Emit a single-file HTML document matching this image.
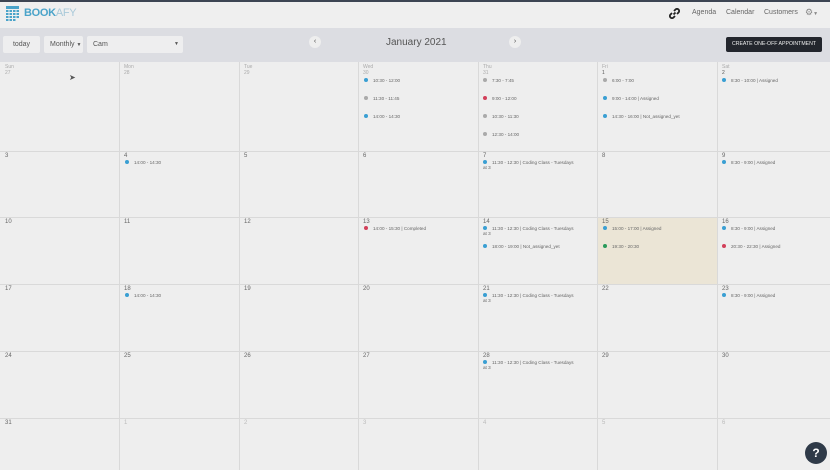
<!DOCTYPE html>
<html><head><meta charset="utf-8"><style>
*{margin:0;padding:0;box-sizing:border-box}
body{width:830px;height:470px;overflow:hidden;background:#eeeeee;font-family:"Liberation Sans",sans-serif;position:relative;color:#555}
.a{position:absolute}
.topbar{left:0;top:0;width:830px;height:2px;background:#3d4553}
.hdr{left:0;top:2px;width:830px;height:26px;background:#efefef}
.tb{left:0;top:28px;width:830px;height:34px;background:#dcdde2}
.btn{background:#eeeeef;border-radius:2px;font-size:7px;color:#555;line-height:17px;height:17px}
.vl{width:1px;background:#d9d9d9;top:62px;height:408px}
.hl{height:1px;background:#d9d9d9;left:0;width:830px}
.dn{font-size:6px;color:#666}
.dh{font-size:5px;color:#aaa}
.g{color:#bbb}
.ev{font-size:4.6px;color:#666;white-space:nowrap;line-height:5px}
.dot{position:absolute;width:4px;height:4px;border-radius:50%}
.b{background:#3a9fd3}.r{background:#d2405a}.gr{background:#aaa}.gn{background:#2a9a5a}
.nav{font-size:7px;color:#666}
</style></head><body>
<div class="a topbar"></div>
<div class="a hdr"></div>
<svg class="a" style="left:6px;top:6px" width="13" height="15" viewBox="0 0 13 15">
<rect x="0" y="0" width="13" height="3" fill="#4aa3c9"/>
<g fill="#4aa3c9">
<rect x="0" y="4" width="2.5" height="2"/><rect x="3.5" y="4" width="2.5" height="2"/><rect x="7" y="4" width="2.5" height="2"/><rect x="10.5" y="4" width="2.5" height="2"/>
<rect x="0" y="7" width="2.5" height="2"/><rect x="3.5" y="7" width="2.5" height="2"/><rect x="7" y="7" width="2.5" height="2"/><rect x="10.5" y="7" width="2.5" height="2"/>
<rect x="0" y="10" width="2.5" height="2"/><rect x="3.5" y="10" width="2.5" height="2"/><rect x="7" y="10" width="2.5" height="2"/><rect x="10.5" y="10" width="2.5" height="2"/>
<rect x="0" y="13" width="2.5" height="2"/><rect x="3.5" y="13" width="2.5" height="2"/><rect x="7" y="13" width="2.5" height="2"/>
</g></svg>
<div class="a" style="left:24px;top:7px;font-size:11px;font-weight:bold;letter-spacing:-0.3px;color:#4aa3c9">BOOK<span style="color:#a9c9d9;font-weight:normal">AFY</span></div>
<svg class="a" style="left:669px;top:8px" width="11" height="11" viewBox="0 0 11 11"><g fill="none" stroke="#222" stroke-width="1.8"><path d="M4.5 6.5 L6.5 4.5"/><path d="M5 3 L6.5 1.5 A2 2 0 0 1 9.5 4.5 L8 6"/><path d="M3 5 L1.5 6.5 A2 2 0 0 0 4.5 9.5 L6 8"/></g></svg>
<div class="a nav" style="left:692px;top:9px">Agenda</div>
<div class="a nav" style="left:726px;top:9px">Calendar</div>
<div class="a nav" style="left:764px;top:9px">Customers</div>
<div class="a nav" style="left:805px;top:7px;font-size:9px;color:#888">⚙<span style="font-size:5px">▼</span></div>
<div class="a tb"></div>
<div class="a btn" style="left:3px;top:36px;width:37px;text-align:center">today</div>
<div class="a btn" style="left:44px;top:36px;width:39px;padding-left:6px">Monthly <span style="font-size:5px">▼</span></div>
<div class="a btn" style="left:87px;top:36px;width:96px;padding-left:6px">Cam<span style="position:absolute;right:4px;font-size:5px">▼</span></div>
<div class="a" style="left:309px;top:36px;width:12px;height:12px;border-radius:50%;background:#eee;font-size:7px;text-align:center;line-height:12px;color:#444">‹</div>
<div class="a" style="left:509px;top:36px;width:12px;height:12px;border-radius:50%;background:#eee;font-size:7px;text-align:center;line-height:12px;color:#444">›</div>
<div class="a" style="left:386px;top:37px;font-size:10px;color:#555">January 2021</div>
<div class="a" style="left:726px;top:37px;width:96px;height:15px;background:#23262d;border-radius:2px;color:#eee;font-size:5.2px;text-align:center;line-height:15px">CREATE ONE-OFF APPOINTMENT</div>

<div class="a" style="left:598px;top:218px;width:119px;height:66px;background:#ebe5d6"></div>

<div class="a vl" style="left:119px"></div><div class="a vl" style="left:239px"></div><div class="a vl" style="left:358px"></div><div class="a vl" style="left:478px"></div><div class="a vl" style="left:597px"></div><div class="a vl" style="left:717px"></div>
<div class="a hl" style="top:151px"></div><div class="a hl" style="top:217px"></div><div class="a hl" style="top:284px"></div><div class="a hl" style="top:351px"></div><div class="a hl" style="top:418px"></div>

<!-- row1 -->
<div class="a dh" style="left:5px;top:64px">Sun<br>27</div>
<div class="a dh" style="left:124px;top:64px">Mon<br>28</div>
<div class="a dh" style="left:244px;top:64px">Tue<br>29</div>
<div class="a dh" style="left:363px;top:64px">Wed<br>30</div>
<div class="a dh" style="left:483px;top:64px">Thu<br>31</div>
<div class="a dh" style="left:602px;top:64px">Fri<br><span style="color:#555">1</span></div>
<div class="a dh" style="left:722px;top:64px">Sat<br><span style="color:#555">2</span></div>
<div class="a" style="left:69px;top:73px;font-size:8px;color:#555">➤</div>

<div class="a ev" style="left:364px;top:78px"><span class="dot b" style="left:0;top:0"></span><span style="margin-left:9px">10:30 - 12:00</span></div>
<div class="a ev" style="left:364px;top:96px"><span class="dot gr" style="left:0;top:0"></span><span style="margin-left:9px">11:30 - 11:45</span></div>
<div class="a ev" style="left:364px;top:114px"><span class="dot b" style="left:0;top:0"></span><span style="margin-left:9px">14:00 - 14:30</span></div>
<div class="a ev" style="left:483px;top:78px"><span class="dot gr" style="left:0;top:0"></span><span style="margin-left:9px">7:30 - 7:45</span></div>
<div class="a ev" style="left:483px;top:96px"><span class="dot r" style="left:0;top:0"></span><span style="margin-left:9px">9:00 - 12:00</span></div>
<div class="a ev" style="left:483px;top:114px"><span class="dot gr" style="left:0;top:0"></span><span style="margin-left:9px">10:30 - 11:30</span></div>
<div class="a ev" style="left:483px;top:132px"><span class="dot gr" style="left:0;top:0"></span><span style="margin-left:9px">12:30 - 14:00</span></div>
<div class="a ev" style="left:603px;top:78px"><span class="dot gr" style="left:0;top:0"></span><span style="margin-left:9px">6:00 - 7:00</span></div>
<div class="a ev" style="left:603px;top:96px"><span class="dot b" style="left:0;top:0"></span><span style="margin-left:9px">9:00 - 14:00 | Assigned</span></div>
<div class="a ev" style="left:603px;top:114px"><span class="dot b" style="left:0;top:0"></span><span style="margin-left:9px">14:30 - 16:00 | Not_assigned_yet</span></div>
<div class="a ev" style="left:722px;top:78px"><span class="dot b" style="left:0;top:0"></span><span style="margin-left:9px">8:30 - 10:00 | Assigned</span></div>

<!-- row2 -->
<div class="a dn" style="left:5px;top:153px">3</div><div class="a dn" style="left:124px;top:153px">4</div><div class="a dn" style="left:244px;top:153px">5</div><div class="a dn" style="left:363px;top:153px">6</div><div class="a dn" style="left:483px;top:153px">7</div><div class="a dn" style="left:602px;top:153px">8</div><div class="a dn" style="left:722px;top:153px">9</div>
<div class="a ev" style="left:125px;top:160px"><span class="dot b" style="left:0;top:0"></span><span style="margin-left:9px">14:00 - 14:30</span></div>
<div class="a ev" style="left:483px;top:160px"><span class="dot b" style="left:0;top:0"></span><span style="margin-left:9px">11:30 - 12:30 | Coding Class - Tuesdays</span><br>at 3</div>
<div class="a ev" style="left:722px;top:160px"><span class="dot b" style="left:0;top:0"></span><span style="margin-left:9px">8:30 - 9:00 | Assigned</span></div>

<!-- row3 -->
<div class="a dn" style="left:5px;top:219px">10</div><div class="a dn" style="left:124px;top:219px">11</div><div class="a dn" style="left:244px;top:219px">12</div><div class="a dn" style="left:363px;top:219px">13</div><div class="a dn" style="left:483px;top:219px">14</div><div class="a dn" style="left:602px;top:219px">15</div><div class="a dn" style="left:722px;top:219px">16</div>
<div class="a ev" style="left:364px;top:226px"><span class="dot r" style="left:0;top:0"></span><span style="margin-left:9px">14:00 - 15:30 | Completed</span></div>
<div class="a ev" style="left:483px;top:226px"><span class="dot b" style="left:0;top:0"></span><span style="margin-left:9px">11:30 - 12:30 | Coding Class - Tuesdays</span><br>at 3</div>
<div class="a ev" style="left:483px;top:244px"><span class="dot b" style="left:0;top:0"></span><span style="margin-left:9px">18:00 - 19:00 | Not_assigned_yet</span></div>
<div class="a ev" style="left:603px;top:226px"><span class="dot b" style="left:0;top:0"></span><span style="margin-left:9px">15:00 - 17:00 | Assigned</span></div>
<div class="a ev" style="left:603px;top:244px"><span class="dot gn" style="left:0;top:0"></span><span style="margin-left:9px">19:30 - 20:30</span></div>
<div class="a ev" style="left:722px;top:226px"><span class="dot b" style="left:0;top:0"></span><span style="margin-left:9px">8:30 - 9:00 | Assigned</span></div>
<div class="a ev" style="left:722px;top:244px"><span class="dot r" style="left:0;top:0"></span><span style="margin-left:9px">20:30 - 22:30 | Assigned</span></div>

<!-- row4 -->
<div class="a dn" style="left:5px;top:286px">17</div><div class="a dn" style="left:124px;top:286px">18</div><div class="a dn" style="left:244px;top:286px">19</div><div class="a dn" style="left:363px;top:286px">20</div><div class="a dn" style="left:483px;top:286px">21</div><div class="a dn" style="left:602px;top:286px">22</div><div class="a dn" style="left:722px;top:286px">23</div>
<div class="a ev" style="left:125px;top:293px"><span class="dot b" style="left:0;top:0"></span><span style="margin-left:9px">14:00 - 14:30</span></div>
<div class="a ev" style="left:483px;top:293px"><span class="dot b" style="left:0;top:0"></span><span style="margin-left:9px">11:30 - 12:30 | Coding Class - Tuesdays</span><br>at 3</div>
<div class="a ev" style="left:722px;top:293px"><span class="dot b" style="left:0;top:0"></span><span style="margin-left:9px">8:30 - 9:00 | Assigned</span></div>

<!-- row5 -->
<div class="a dn" style="left:5px;top:353px">24</div><div class="a dn" style="left:124px;top:353px">25</div><div class="a dn" style="left:244px;top:353px">26</div><div class="a dn" style="left:363px;top:353px">27</div><div class="a dn" style="left:483px;top:353px">28</div><div class="a dn" style="left:602px;top:353px">29</div><div class="a dn" style="left:722px;top:353px">30</div>
<div class="a ev" style="left:483px;top:360px"><span class="dot b" style="left:0;top:0"></span><span style="margin-left:9px">11:30 - 12:30 | Coding Class - Tuesdays</span><br>at 3</div>

<!-- row6 -->
<div class="a dn" style="left:5px;top:420px">31</div>
<div class="a dn g" style="left:124px;top:420px">1</div><div class="a dn g" style="left:244px;top:420px">2</div><div class="a dn g" style="left:363px;top:420px">3</div><div class="a dn g" style="left:483px;top:420px">4</div><div class="a dn g" style="left:602px;top:420px">5</div><div class="a dn g" style="left:722px;top:420px">6</div>

<div class="a" style="left:805px;top:442px;width:22px;height:22px;border-radius:50%;background:#2f3a48;color:#fff;font-size:12px;font-weight:bold;text-align:center;line-height:22px">?</div>
</body></html>
